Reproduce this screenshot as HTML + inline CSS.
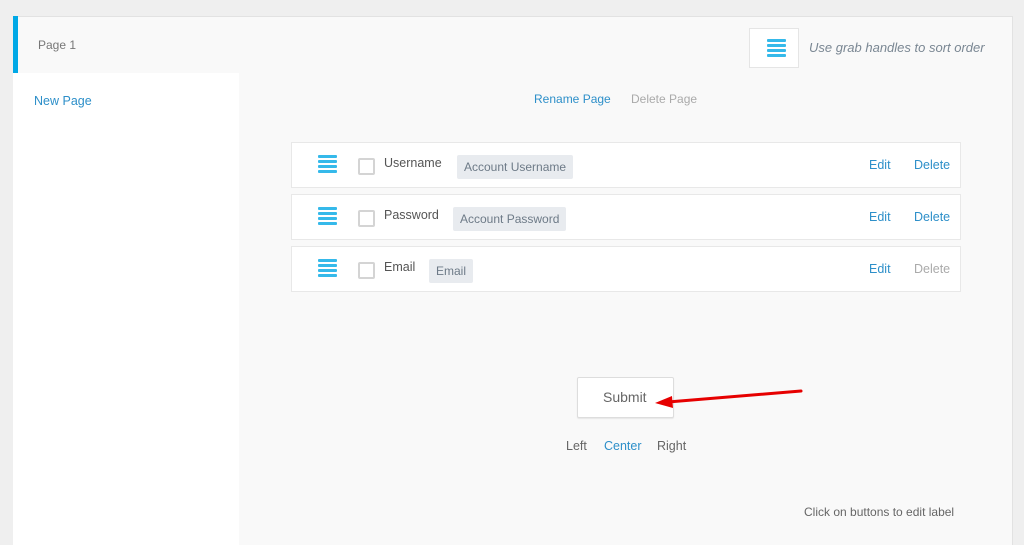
<!DOCTYPE html>
<html><head><style>
html,body{margin:0;width:1024px;height:545px;overflow:hidden}
body{background:#efefef;font-family:"Liberation Sans",sans-serif;position:relative;font-size:13px}
.a{position:absolute}
.panel{left:13px;top:16px;width:998px;height:529px;background:#f9f9f9;border:1px solid #e2e2e2;border-bottom:none}
.bar{background:#35b9ea;height:3px;border-radius:1px;width:19px;position:absolute;left:0}
.h{position:absolute;width:19px;height:18px}
.row{left:291px;width:668px;height:44px;background:#fff;border:1px solid #e8e8e8}
.cb{position:absolute;left:66px;top:15px;width:13px;height:13px;border:2px solid #d4d4d4;border-radius:2px;background:#fff}
.lbl{position:absolute;left:92px;top:13px;color:#555;font-size:12.5px}
.tag{position:absolute;top:12px;height:24px;line-height:24px;padding:0 7px;background:#e8ebef;color:#6d7a87;font-size:12px;border-radius:2px}
.lnk{color:#2d8fc9}
</style></head><body>
<div class="a panel"></div>
<div class="a" style="left:13px;top:16px;width:5px;height:57px;background:#00a8e6"></div>
<div class="a" style="left:38px;top:38px;color:#777;font-size:12px">Page 1</div>
<div class="a" style="left:13px;top:73px;width:226px;height:472px;background:#fff"></div>
<div class="a lnk" style="left:34px;top:94px;font-size:12.5px">New Page</div>
<div class="a" style="left:749px;top:28px;width:48px;height:38px;background:#fff;border:1px solid #e5e5e5"></div>
<div class="h" style="left:767px;top:39px"><div class="bar" style="top:0"></div><div class="bar" style="top:5px"></div><div class="bar" style="top:10px"></div><div class="bar" style="top:15px"></div></div>
<div class="a" style="left:809px;top:40px;color:#7a8793;font-style:italic;font-size:13px">Use grab handles to sort order</div>
<div class="a lnk" style="left:534px;top:92px;font-size:12px">Rename Page</div>
<div class="a" style="left:631px;top:92px;font-size:12px;color:#aaa">Delete Page</div>

<div class="a row" style="top:142px">
<div class="h" style="left:26px;top:12px"><div class="bar" style="top:0"></div><div class="bar" style="top:5px"></div><div class="bar" style="top:10px"></div><div class="bar" style="top:15px"></div></div>
<div class="cb"></div><div class="lbl">Username</div><div class="tag" style="left:165px">Account Username</div>
<div class="a lnk" style="left:577px;top:15px;font-size:12.5px">Edit</div><div class="a lnk" style="left:622px;top:15px;font-size:12.5px">Delete</div></div>
<div class="a row" style="top:194px">
<div class="h" style="left:26px;top:12px"><div class="bar" style="top:0"></div><div class="bar" style="top:5px"></div><div class="bar" style="top:10px"></div><div class="bar" style="top:15px"></div></div>
<div class="cb"></div><div class="lbl">Password</div><div class="tag" style="left:161px">Account Password</div>
<div class="a lnk" style="left:577px;top:15px;font-size:12.5px">Edit</div><div class="a lnk" style="left:622px;top:15px;font-size:12.5px">Delete</div></div>
<div class="a row" style="top:246px">
<div class="h" style="left:26px;top:12px"><div class="bar" style="top:0"></div><div class="bar" style="top:5px"></div><div class="bar" style="top:10px"></div><div class="bar" style="top:15px"></div></div>
<div class="cb"></div><div class="lbl">Email</div><div class="tag" style="left:137px">Email</div>
<div class="a lnk" style="left:577px;top:15px;font-size:12.5px">Edit</div><div class="a" style="left:622px;top:15px;color:#aaa;font-size:12.5px">Delete</div></div>

<div class="a" style="left:577px;top:377px;width:95px;height:39px;background:#fff;border:1px solid #ddd;border-radius:2px;box-shadow:0 1px 1px rgba(0,0,0,.08)"></div>
<div class="a" style="left:603px;top:389px;color:#666;font-size:14px">Submit</div>
<svg class="a" style="left:650px;top:385px" width="155" height="25"><line x1="151" y1="6" x2="18" y2="17" stroke="#e60000" stroke-width="3" stroke-linecap="round"/><polygon points="5,18 22,11 23,23" fill="#e60000"/></svg>
<div class="a" style="left:566px;top:439px;color:#666;font-size:12.5px">Left</div>
<div class="a lnk" style="left:604px;top:439px;font-size:12.5px">Center</div>
<div class="a" style="left:657px;top:439px;color:#666;font-size:12.5px">Right</div>
<div class="a" style="left:804px;top:505px;color:#666;font-size:12px">Click on buttons to edit label</div>
</body></html>
